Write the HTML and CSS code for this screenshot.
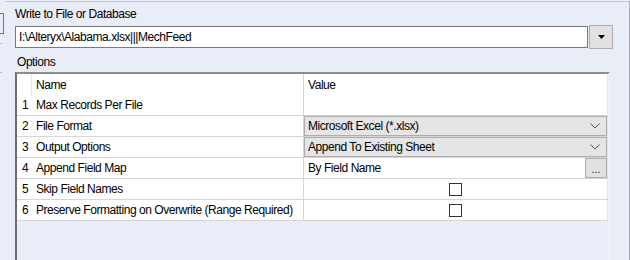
FILE: index.html
```html
<!DOCTYPE html>
<html lang="en">
<head>
<meta charset="UTF-8">
<title>Write to File or Database</title>
<link rel="stylesheet" href="styles.css">
</head>
<body>
<div class="window">
    <div class="edge">
        <div class="edge-btn"></div>
        <div class="edge-tick first"></div>
        <div class="edge-tick"></div>
    </div>

    <div class="panel">
        <div class="caption">Write to File or Database</div>
        <div class="path-row">
            <div class="path-box">I:\Alteryx\Alabama.xlsx|||MechFeed</div>
            <div class="drop-btn">
                <svg width="7" height="4" viewBox="0 0 7 4"><path d="M0 0H7L3.5 4Z" fill="#000"/></svg>
            </div>
        </div>

        <div class="caption options">Options</div>
        <div class="grid">
            <div class="row head">
                <div class="num"></div>
                <div class="name">Name</div>
                <div class="value text">Value</div>
            </div>
            <div class="row">
                <div class="num">1</div>
                <div class="name">Max Records Per File</div>
                <div class="value"></div>
            </div>
            <div class="row">
                <div class="num">2</div>
                <div class="name">File Format</div>
                <div class="value">
                    <div class="combo">
                        <span>Microsoft Excel (*.xlsx)</span>
                        <svg width="10" height="6" viewBox="0 0 10 6"><path d="M0.5 0.5L5 5L9.5 0.5" fill="none" stroke="#555" stroke-width="1"/></svg>
                    </div>
                </div>
            </div>
            <div class="row">
                <div class="num">3</div>
                <div class="name">Output Options</div>
                <div class="value">
                    <div class="combo">
                        <span>Append To Existing Sheet</span>
                        <svg width="10" height="6" viewBox="0 0 10 6"><path d="M0.5 0.5L5 5L9.5 0.5" fill="none" stroke="#555" stroke-width="1"/></svg>
                    </div>
                </div>
            </div>
            <div class="row">
                <div class="num">4</div>
                <div class="name">Append Field Map</div>
                <div class="value text">
                    <span>By Field Name</span>
                    <div class="dots-btn">...</div>
                </div>
            </div>
            <div class="row">
                <div class="num">5</div>
                <div class="name">Skip Field Names</div>
                <div class="value check"><div class="checkbox"></div></div>
            </div>
            <div class="row">
                <div class="num">6</div>
                <div class="name">Preserve Formatting on Overwrite (Range Required)</div>
                <div class="value check"><div class="checkbox"></div></div>
            </div>
        </div>
    </div>
</div>
</body>
</html>
```

FILE: styles.css
```css
body {
    margin: 0;
    width: 630px;
    height: 260px;
    overflow: hidden;
    background-color: #e9edf8;
    font-family: "Liberation Sans", Arial, sans-serif;
    font-size: 12px;
    letter-spacing: -0.45px;
    color: #000;
}

.window {
    display: flex;
    height: 260px;
    padding-top: 1px;
    box-sizing: border-box;
}

/* bordo sinistro con il bottone tagliato */
.edge {
    width: 5px;
    padding-top: 12px;
}

.edge-btn {
    width: 3px;
    height: 19px;
    border: 1px solid #3d7ed6;
    border-left: none;
}

.edge-tick {
    width: 2px;
    height: 1px;
    margin-top: 28px;
    background-color: #b4b8c4;
}

.edge-tick.first {
    margin-top: 9px;
}

.panel {
    flex: 1;
    border-top: 1px solid #c4c8d3;
    border-right: 1px solid #a9adb9;
    padding: 5px 16px 0 10px;
}

.caption {
    line-height: 15px;
}

.caption.options {
    margin-top: 6px;
    padding-left: 2px;
}

.path-row {
    display: flex;
    align-items: center;
    gap: 1px;
    margin-top: 3px;
}

.path-box {
    flex: 1;
    height: 22px;
    box-sizing: border-box;
    border: 1px solid #7a7a7a;
    background-color: #fff;
    padding-left: 3px;
    line-height: 20px;
}

.drop-btn {
    width: 24px;
    height: 24px;
    box-sizing: border-box;
    border: 1px solid #adadad;
    background-color: #e1e1e1;
    display: flex;
    align-items: center;
    justify-content: center;
}

.grid {
    width: 595px;
    height: 200px;
    margin-top: 2px;
    box-sizing: border-box;
    border-top: 2px solid #8c8c8c;
    border-left: 2px solid #6d6d6d;
    border-right: 2px solid #f0f0f0;
}

.row {
    display: grid;
    grid-template-columns: 15px 272px 304px;
    height: 21px;
    box-sizing: border-box;
    border-bottom: 1px solid #d6d6d6;
    background-color: #fff;
    line-height: 20px;
}

.row.head {
    border-bottom: none;
    line-height: 22px;
}

.row.head .num {
    border-right: 1px solid #e6e6e6;
}

.num {
    padding-left: 5px;
}

.name {
    padding-left: 4px;
    border-right: 1px solid #d6d6d6;
    white-space: nowrap;
}

.value {
    border-right: 1px solid #e4e4e4;
}

.value.text {
    display: flex;
    justify-content: space-between;
    padding-left: 4px;
}

.combo {
    height: 20px;
    box-sizing: border-box;
    border: 1px solid #adadad;
    background-color: #e5e5e5;
    display: flex;
    align-items: center;
    justify-content: space-between;
    padding: 0 6px 0 3px;
    line-height: 18px;
}

.dots-btn {
    width: 22px;
    height: 20px;
    box-sizing: border-box;
    border: 1px solid #adadad;
    background-color: #e1e1e1;
    text-align: center;
    line-height: 20px;
    font-size: 11px;
    letter-spacing: 0;
    color: #30103a;
}

.value.check {
    display: flex;
    align-items: center;
    justify-content: center;
}

.checkbox {
    width: 13px;
    height: 13px;
    box-sizing: border-box;
    border: 1px solid #333;
    background-color: #fff;
}
```
